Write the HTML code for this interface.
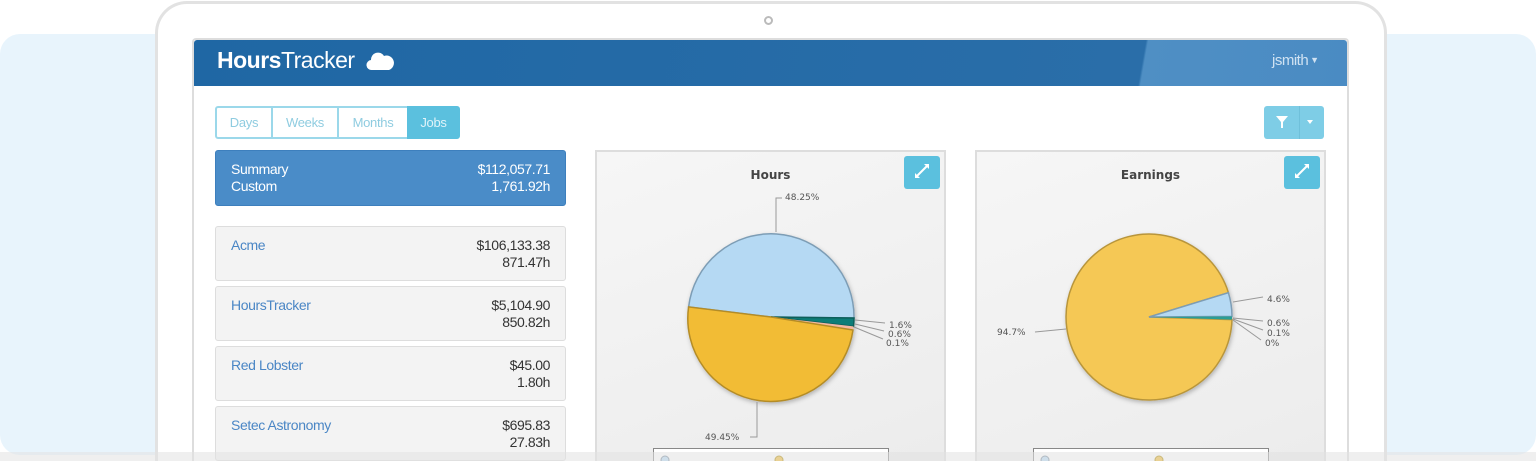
<!DOCTYPE html>
<html style="width:1536px;height:461px;overflow:hidden"><head><meta charset="utf-8"><style>
*{margin:0;padding:0;box-sizing:border-box}
body{width:1536px;height:461px;overflow:hidden;background:#fff;font-family:"Liberation Sans",sans-serif;position:relative}
.a{position:absolute}
.row{position:absolute;left:215px;width:351px;height:55px;background:#f3f3f3;border:1px solid #ddd;border-radius:3px;font-size:14px;letter-spacing:-0.4px}
.row .n{position:absolute;left:15px;top:10px;color:#4a86c5}
.row .v{position:absolute;right:15px;top:10px;text-align:right;color:#333;line-height:17px}
.tab{position:absolute;top:106px;height:33px;border:2px solid #9bd8ea;font-size:13px;color:#8fcce0;text-align:center;line-height:29px;background:#fff;letter-spacing:-0.3px}
.panel{position:absolute;top:150px;width:351px;height:311px;background:linear-gradient(160deg,#f6f6f6,#ececec);border:2px solid #ddd;border-bottom:none}
.exp{position:absolute;top:4px;right:4px;width:36px;height:33px;background:#5bc0de;border-radius:3px}
.ttl{position:absolute;top:16px;width:100%;text-align:center;font:bold 12px "DejaVu Sans",sans-serif;color:#444}
svg text{font-family:"DejaVu Sans",sans-serif;font-size:9px;fill:#555}
</style></head><body>
<div class="a" style="left:0;top:34px;width:1536px;height:421px;background:#e8f4fc;border-radius:20px"></div>
<div class="a" style="left:155px;top:1px;width:1232px;height:460px;background:#fff;border:3px solid #e2e2e2;border-bottom:none;border-radius:32px 32px 0 0"></div>
<div class="a" style="left:764px;top:16px;width:9px;height:9px;border:2px solid #bbb;border-radius:50%"></div>
<div class="a" style="left:192px;top:38px;width:1157px;height:423px;border:2px solid #ddd;border-bottom:none;border-radius:4px 4px 0 0;background:#fff"></div>
<div class="a" style="left:194px;top:40px;width:1153px;height:46px;background:linear-gradient(100deg,#1f67a4 0%,#2a6ea9 82%,#4f8fc4 82.2%,#4a8bc3 100%);border-radius:3px 3px 0 0"></div>
<div class="a" style="left:217px;top:47px;color:#fff;font-size:23px;letter-spacing:-0.5px;font-weight:bold"><span>Hours</span><span style="font-weight:normal">Tracker</span></div>
<svg class="a" style="left:366px;top:50px" width="28" height="22" viewBox="0 0 28 22"><path d="M6 20 A5 5 0 0 1 5 10 A7 7 0 0 1 18 6 A6 6 0 0 1 23 20 Z" fill="#fff"/></svg>
<div class="a" style="left:1272px;top:52px;color:#d0e2f2;font-size:15px;letter-spacing:-0.5px">jsmith<span style="font-size:9px;vertical-align:2px"> ▼</span></div>
<div class="tab" style="left:215px;width:58px;border-radius:3px 0 0 3px">Days</div>
<div class="tab" style="left:271px;width:68px">Weeks</div>
<div class="tab" style="left:337px;width:72px">Months</div>
<div class="tab" style="left:407px;width:53px;background:#5bc0de;border-color:#5bc0de;color:#e0f3f9;border-radius:0 3px 3px 0">Jobs</div>
<div class="a" style="left:1264px;top:106px;width:60px;height:33px;background:#7ecde6;border-radius:3px"></div>
<div class="a" style="left:1299px;top:106px;width:1px;height:33px;background:#6fc0da"></div>
<svg class="a" style="left:1276px;top:116px" width="12" height="12" viewBox="0 0 12 12"><path d="M0 0H12L7 6V12H5V6Z" fill="#fff"/></svg>
<div class="a" style="left:1307px;top:120px;border:3px solid transparent;border-top:4px solid #fff"></div>
<div class="a" style="left:215px;top:150px;width:351px;height:56px;background:#4a8cc8;border:1px solid #3d7fbd;border-radius:3px;color:#fff;font-size:14px;letter-spacing:-0.4px">
<div class="a" style="left:15px;top:10px;line-height:17px">Summary<br>Custom</div>
<div class="a" style="right:15px;top:10px;line-height:17px;text-align:right">$112,057.71<br>1,761.92h</div></div>
<div class="row" style="top:226px"><span class="n">Acme</span><span class="v">$106,133.38<br>871.47h</span></div>
<div class="row" style="top:286px"><span class="n">HoursTracker</span><span class="v">$5,104.90<br>850.82h</span></div>
<div class="row" style="top:346px"><span class="n">Red Lobster</span><span class="v">$45.00<br>1.80h</span></div>
<div class="row" style="top:406px"><span class="n">Setec Astronomy</span><span class="v">$695.83<br>27.83h</span></div>
<div class="panel" style="left:595px"><div class="ttl">Hours</div><div class="exp"></div></div>
<div class="panel" style="left:975px"><div class="ttl">Earnings</div><div class="exp"></div></div>
<svg class="a" style="left:0;top:0" width="1536" height="461">
<defs><filter id="sh"><feDropShadow dx="1" dy="2" stdDeviation="2" flood-opacity="0.25"/></filter></defs>
<g stroke="#fff" stroke-width="2" stroke-linecap="round"><path d="M917 176 L927 166 M1297 176 L1307 166"/></g>
<g fill="#fff"><path d="M915 178 L915 173 L920 178Z M929 164 L924 164 L929 169Z M1295 178 L1295 173 L1300 178Z M1309 164 L1304 164 L1309 169Z"/></g>
<g filter="url(#sh)" stroke-width="1.5">
<path d="M771 317 L688.6 306.9 A83 83 0 0 1 854 318 Z" fill="#b5d9f3" stroke="#7d9db5"/>
<path d="M771 317 L854 318 A83 83 0 0 1 853.5 326.4 Z" fill="#0f7d78" stroke="#0b5e5a"/>
<path d="M771 317 L853.5 326.4 A83 83 0 0 1 853 330 Z" fill="#f4b8a0" stroke="none"/>
<path d="M771 317 L853 330 A83 83 0 0 1 688.6 306.9 Z" fill="#f2bc35" stroke="#b48c28"/>
<path d="M1149 317 L1232 319.6 A83 83 0 1 1 1228.4 292.7 Z" fill="#f5c855" stroke="#b8953a"/>
<path d="M1149 317 L1228.4 292.7 A83 83 0 0 1 1232 316.4 Z" fill="#b5d9f3" stroke="#7d9db5"/>
<path d="M1149 317 L1232 316.4 A83 83 0 0 1 1232 319.6 Z" fill="#2a9d95" stroke="none"/>
</g>
<g stroke="#999" fill="none" stroke-width="1">
<path d="M776 232V198H782M757 402V437H750M855 320L885 323M855 324L884 331M854 327L883 339"/>
<path d="M1233 302L1263 297M1233 318L1263 321M1233 319L1263 330M1233 320L1261 340M1066 329L1035 332"/>
</g>
<text x="785" y="200">48.25%</text><text x="705" y="440">49.45%</text>
<text x="889" y="328">1.6%</text><text x="888" y="337">0.6%</text><text x="886" y="346">0.1%</text>
<text x="1267" y="302">4.6%</text><text x="1267" y="326">0.6%</text><text x="1267" y="336">0.1%</text><text x="1265" y="346">0%</text><text x="997" y="335">94.7%</text>
<rect x="653.5" y="448.5" width="235" height="20" fill="#fff" stroke="#888"/>
<rect x="1033.5" y="448.5" width="235" height="20" fill="#fff" stroke="#888"/>
<circle cx="665" cy="460" r="4" fill="#b5d9f3" stroke="#789"/><circle cx="779" cy="460" r="4" fill="#f2bc35" stroke="#a80"/>
<circle cx="1045" cy="460" r="4" fill="#b5d9f3" stroke="#789"/><circle cx="1159" cy="460" r="4" fill="#f2bc35" stroke="#a80"/>
</svg>
<div class="a" style="left:0;top:452px;width:1536px;height:9px;background:rgba(225,225,225,0.55)"></div>
</body></html>
